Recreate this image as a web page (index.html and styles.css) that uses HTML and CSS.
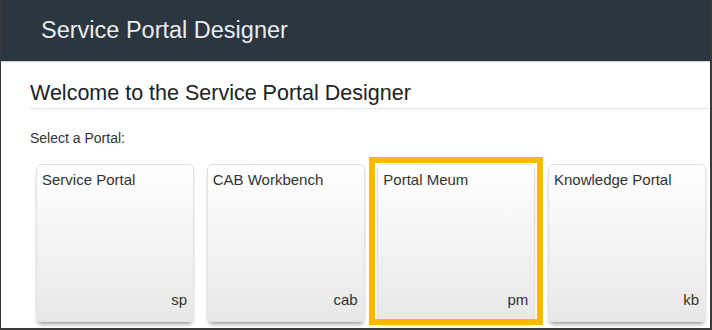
FILE: index.html
```html
<!DOCTYPE html>
<html>
<head>
<meta charset="utf-8">
<link rel="stylesheet" href="styles.css">
</head>
<body>
<div class="frame">
  <header class="topbar">
    <span class="brand">Service Portal Designer</span>
  </header>
  <main class="content">
    <h1 class="welcome">Welcome to the Service Portal Designer</h1>
    <p class="prompt">Select a Portal:</p>
    <div class="cards">
      <div class="card"><span class="card-title">Service Portal</span><span class="card-id">sp</span></div>
      <div class="card"><span class="card-title">CAB Workbench</span><span class="card-id">cab</span></div>
      <div class="card selected"><span class="card-title">Portal Meum</span><span class="card-id">pm</span></div>
      <div class="card"><span class="card-title">Knowledge Portal</span><span class="card-id">kb</span></div>
    </div>
  </main>
</div>
</body>
</html>
```
FILE: styles.css
```css
html, body {
  margin: 0;
  padding: 0;
  background: #fff;
}
.frame {
  box-sizing: border-box;
  width: 712px;
  height: 330px;
  border-left: 1px solid #3a3a3a;
  border-right: 2px solid #3a3a3a;
  border-bottom: 2px solid #3a3a3a;
  overflow: hidden;
  font-family: "Liberation Sans", Arial, sans-serif;
  color: #333;
}
.topbar {
  height: 61px;
  background: #2c3641;
  border-bottom: 1px solid #c9d0d8;
  display: flex;
  align-items: center;
  padding-left: 40px;
}
.brand {
  color: #e9ecef;
  font-size: 23.5px;
  line-height: 28px;
  margin-top: -2px;
}
.content {
  padding-left: 29px;
}
.welcome {
  margin: 17.5px 0 0 0;
  font-size: 21.5px;
  font-weight: normal;
  line-height: 26px;
  padding-bottom: 2.5px;
  border-bottom: 1px solid #e5e5e5;
  color: #222;
}
.prompt {
  margin: 21px 0 0 0;
  font-size: 14px;
  line-height: 17px;
}
.cards {
  margin-top: 17px;
  margin-left: 6px;
  display: grid;
  grid-template-columns: repeat(4, 158px);
  column-gap: 12.67px;
}
.card {
  position: relative;
  box-sizing: border-box;
  height: 157.5px;
  border: 1px solid #e2e2e2;
  border-radius: 5px;
  background: linear-gradient(#ffffff, #e8e8e8);
  box-shadow: 0 4px 4px -2px rgba(0, 0, 0, 0.4);
  display: flex;
  flex-direction: column;
  justify-content: space-between;
  padding: 6px 6px 12px 5px;
  font-size: 15px;
  line-height: 18px;
}
.card-id {
  align-self: flex-end;
}
.selected::after {
  content: "";
  position: absolute;
  top: -8px;
  left: -9px;
  right: -9px;
  bottom: -4px;
  border: 6px solid #fcb900;
}
```
